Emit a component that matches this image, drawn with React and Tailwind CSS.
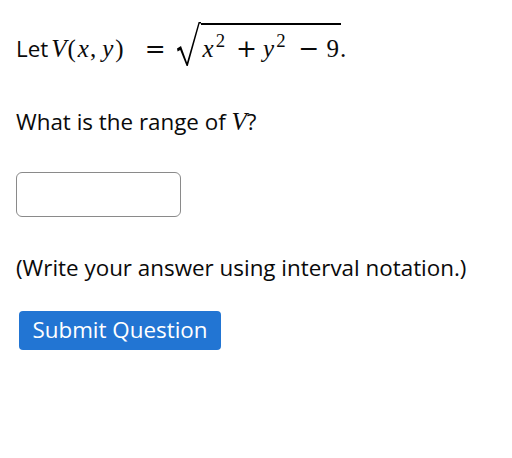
const sans = 'font-["Open_Sans",sans-serif]';
const serif = 'font-["Liberation_Serif",serif]';
const op = 'font-["DejaVu_Serif",serif]';

function MathVar({ children }) {
  return <span className={`${serif} italic text-[25px]`}>{children}</span>;
}

export default function App() {
  return (
    <div className={`w-[512px] h-[458px] bg-white text-[#0a0a0a] ${sans} text-[22.4px] pl-[16px] pt-[21px]`}>
      <div className="leading-[32px] whitespace-nowrap">
        <span>Let</span>
        <span className={`${serif} text-[25px]`}>
          <span className="italic ml-[3px]">V</span>
          <span className="ml-[1px]">(</span>
          <span className="italic ml-[2px]">x</span>
          <span className="ml-[1px]">,</span>
          <span className="italic ml-[6px]">y</span>
          <span className="ml-[2px]">)</span>
          <span className={`${op} ml-[21px]`}>=</span>
        </span>
        <svg width="25" height="46" viewBox="0 0 25 46" className="inline-block align-[-10px] ml-[10px]">
          <path d="M1 27.5 L5 25 L11 41.5 L22.6 1 L25 1 L25 2.6 L23.6 2.6 L11.8 45 L10.6 45 L4.2 29 L1.6 30.5 Z" fill="#000" />
        </svg>
        <span className={`${serif} text-[25px] inline-block leading-[28px] pt-[10px] border-t-2 border-black pr-[2px]`}>
          <span className="italic ml-[2px]">x</span>
          <sup className="top-[-0.55em] ml-[2px]">2</sup>
          <span className={`${op} ml-[11px]`}>+</span>
          <span className="italic ml-[6px]">y</span>
          <sup className="top-[-0.55em] ml-[2px]">2</sup>
          <span className={`${op} ml-[13px]`}>−</span>
          <span className="ml-[7px]">9</span>
        </span>
        <span className={`${serif} text-[25px] ml-[-1px]`}>.</span>
      </div>
      <p className="mt-[39px] leading-[32px]">
        What is the range of <MathVar>V</MathVar>?
      </p>
      <input type="text" className="mt-[34px] block w-[165px] h-[45px] border border-[#8a8a8a] rounded-[6px] bg-white" />
      <p className="mt-[35px] leading-[32px]">(Write your answer using interval notation.)</p>
      <button className="mt-[27px] ml-[3px] block w-[202px] h-[39px] rounded-[4px] bg-[#2275d3] text-white text-[22.4px] leading-none">
        Submit Question
      </button>
    </div>
  );
}
